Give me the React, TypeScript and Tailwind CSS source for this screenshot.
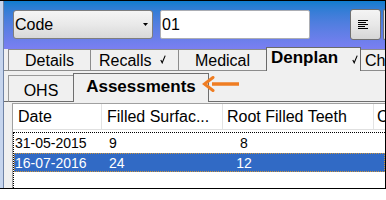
import React from 'react';

const Check = ({ className = '' }: { className?: string }) => (
  <svg width="6" height="9" viewBox="0 0 6 9" className={`shrink-0 ${className}`}>
    <path d="M0.8 5 L2.2 7.8 L5.2 0.6" fill="none" stroke="#000" strokeWidth="1.1" />
  </svg>
);

const AlignLeftIcon = () => (
  <svg width="11" height="9" viewBox="0 0 11 9" shapeRendering="crispEdges">
    <rect x="0" y="0" width="10" height="1" fill="#000" />
    <rect x="0" y="2" width="8" height="1" fill="#000" />
    <rect x="0" y="4" width="10" height="1" fill="#000" />
    <rect x="0" y="6" width="7" height="1" fill="#000" />
    <rect x="0" y="8" width="10" height="1" fill="#000" />
  </svg>
);

const rows = [
  { date: '31-05-2015', filled: '9', root: '8', selected: false },
  { date: '16-07-2016', filled: '24', root: '12', selected: true },
];

export default function App() {
  return (
    <div className="relative w-[386px] h-[200px] bg-white overflow-hidden font-['Liberation_Sans',Arial,sans-serif] text-black">
      <div className="h-[189px] flex border-t border-r border-b border-black">
        {/* window frame strip */}
        <div className="w-[3px] shrink-0 bg-[#c6d5ee]" />

        <div className="flex-1 min-w-0 flex flex-col bg-[#f0f0f0] border-l border-[#6f83a6]">
          {/* Toolbar */}
          <div className="h-[48px] shrink-0 flex items-start bg-gradient-to-b from-[#0c7ccf] to-[#7a7ff2]">
            <div className="ml-[9px] mt-[9px] w-[140px] h-[29px] shrink-0 rounded-[3px] border border-[#7e7e7e] bg-gradient-to-b from-[#f5f5f5] via-[#e9e9e9] to-[#d8d8d8] flex items-center pl-[1px] pr-[4px]">
              <span className="flex-1 text-[16px] leading-[20px]">Code</span>
              <svg width="5" height="3" viewBox="0 0 5 3">
                <path d="M0 0H5L2.5 3Z" fill="#000" />
              </svg>
            </div>
            <div className="ml-[7px] mt-[9px] w-[150px] h-[29px] shrink-0 rounded-[2px] border border-[#abadb3] bg-white flex items-center pl-[1px] text-[16px] leading-[20px]">
              01
            </div>
            <div className="ml-[40px] mt-[8px] w-[31px] h-[31px] shrink-0 rounded-[3px] border border-[#707070] bg-gradient-to-b from-[#f4f4f4] via-[#e8e8e8] to-[#d6d6d6] pl-[7px] pt-[10px]">
              <AlignLeftIcon />
            </div>
            <div className="ml-[2px] mt-[8px] flex-1 h-[31px] rounded-l-[3px] border-l border-t border-b border-[#707070] bg-[#e6e6e6]" />
          </div>

          {/* Main tabs */}
          <div className="h-[22px] shrink-0 flex items-end text-[16px] leading-[20px]">
            <div className="w-[4px] h-[22px] shrink-0 border-b border-[#8c8c8c]" />
            <div className="w-[82px] h-[22px] shrink-0 border-l border-t border-b border-[#8c8c8c] bg-[#f0f0f0] text-center pt-[1px]">
              Details
            </div>
            <div className="w-[88px] h-[22px] shrink-0 border-l border-t border-b border-[#8c8c8c] bg-[#f0f0f0] flex items-start pl-[8px] pt-[1px]">
              <span>Recalls</span>
              <Check className="ml-[9px] mt-[4px]" />
            </div>
            <div className="w-[88px] h-[22px] shrink-0 border-l border-t border-b border-[#8c8c8c] bg-[#f0f0f0] text-center pt-[1px]">
              Medical
            </div>
            <div className="relative w-[95px] h-[24px] shrink-0 border-l border-t border-r border-[#6a6a6a] bg-[#f0f0f0] flex items-start pl-[4px]">
              <span className="font-bold text-[17px]">Denplan</span>
              <Check className="ml-[14px] mt-[7px]" />
            </div>
            <div className="flex-1 min-w-0 h-[22px] border-t border-b border-[#8c8c8c] bg-[#f0f0f0] pl-[4px] pt-[1px] overflow-hidden whitespace-nowrap">
              Charges
            </div>
          </div>

          {/* Sub tabs */}
          <div className="h-[29px] mt-[2px] shrink-0 flex items-end text-[16px] leading-[20px]">
            <div className="w-[4px] h-[29px] shrink-0 border-b border-[#6e6e6e]" />
            <div className="w-[65px] h-[27px] shrink-0 border-l border-t border-b border-[#9a9a9a] border-b-[#6e6e6e] text-center pt-[5px]">
              OHS
            </div>
            <div className="w-[136px] h-[29px] shrink-0 border-l border-t border-r border-[#6e6e6e] text-center pt-[3px] font-bold text-[17px]">
              Assessments
            </div>
            <div className="flex-1 h-[29px] border-b border-[#6e6e6e]" />
          </div>

          {/* Grid */}
          <div className="flex-1 min-h-0 mt-[1px] ml-[8px] flex flex-col bg-white border-l border-t border-[#a0a0a0] overflow-hidden">
            <div className="h-[26px] shrink-0 flex border-b border-[#e0e0e0] text-[16px] leading-[20px] whitespace-nowrap">
              <div className="w-[89px] shrink-0 border-r border-[#e3e3e3] pl-[5px] pt-[3px]">Date</div>
              <div className="w-[121px] shrink-0 border-r border-[#e3e3e3] pl-[5px] pt-[3px]">Filled Surfac...</div>
              <div className="w-[151px] shrink-0 border-r border-[#e3e3e3] pl-[4px] pt-[3px]">Root Filled Teeth</div>
              <div className="flex-1 min-w-0 pl-[3px] pt-[3px] overflow-hidden">Comments</div>
            </div>

            <div className="flex-1 mt-[2px] border-t border-l border-dotted border-black text-[14px] leading-[18px] whitespace-nowrap">
              {rows.map((r) =>
                r.selected ? (
                  <div key={r.date} className="h-[19px] flex border border-dotted border-[#ce953a] bg-[#316ac5] text-white">
                    <div className="w-[86px] shrink-0">{r.date}</div>
                    <div className="w-[121px] shrink-0 pl-[8px]">{r.filled}</div>
                    <div className="pl-[14px]">
                      <span className="inline-block w-[16px] text-center">{r.root}</span>
                    </div>
                  </div>
                ) : (
                  <div key={r.date} className="h-[20px] flex border border-transparent">
                    <div className="w-[86px] shrink-0">{r.date}</div>
                    <div className="w-[121px] shrink-0 pl-[8px]">{r.filled}</div>
                    <div className="pl-[14px]">
                      <span className="inline-block w-[16px] text-center">{r.root}</span>
                    </div>
                  </div>
                )
              )}
            </div>
          </div>
        </div>
      </div>

      {/* annotation arrow */}
      <svg className="absolute left-[202px] top-[76px]" width="38" height="16" viewBox="0 0 38 16">
        <path d="M10 8 H37" stroke="#ef7d22" strokeWidth="3.5" fill="none" />
        <path d="M11 1.5 L2.5 8 L11 14.5" stroke="#ef7d22" strokeWidth="3" fill="none" strokeLinecap="round" />
      </svg>
    </div>
  );
}
